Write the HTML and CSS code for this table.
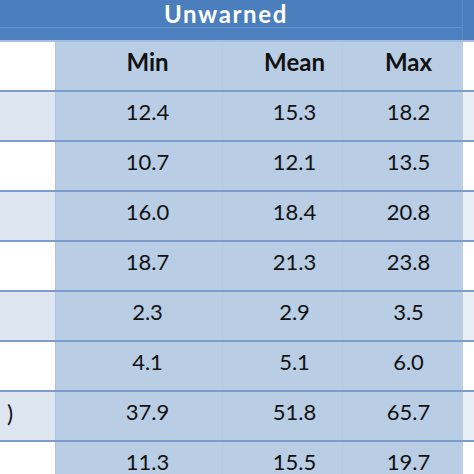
FILE: index.html
```html
<!DOCTYPE html>
<html>
<head>
<meta charset="utf-8">
<link rel="stylesheet" href="styles.css">
</head>
<body>
<div class="table">
  <div class="head">
    <div class="title">Unwarned</div>
    <div class="band"></div>
  </div>
  <div class="row first">
    <div class="lab"></div>
    <div class="cell c1 b">Min</div>
    <div class="cell c2 b">Mean</div>
    <div class="cell c3 b">Max</div>
    <div class="end"></div>
  </div>
  <div class="row alt">
    <div class="lab"></div>
    <div class="cell c1">12.4</div>
    <div class="cell c2">15.3</div>
    <div class="cell c3">18.2</div>
    <div class="end"></div>
  </div>
  <div class="row">
    <div class="lab"></div>
    <div class="cell c1">10.7</div>
    <div class="cell c2">12.1</div>
    <div class="cell c3">13.5</div>
    <div class="end"></div>
  </div>
  <div class="row alt">
    <div class="lab"></div>
    <div class="cell c1">16.0</div>
    <div class="cell c2">18.4</div>
    <div class="cell c3">20.8</div>
    <div class="end"></div>
  </div>
  <div class="row">
    <div class="lab"></div>
    <div class="cell c1">18.7</div>
    <div class="cell c2">21.3</div>
    <div class="cell c3">23.8</div>
    <div class="end"></div>
  </div>
  <div class="row alt">
    <div class="lab"></div>
    <div class="cell c1">2.3</div>
    <div class="cell c2">2.9</div>
    <div class="cell c3">3.5</div>
    <div class="end"></div>
  </div>
  <div class="row">
    <div class="lab"></div>
    <div class="cell c1">4.1</div>
    <div class="cell c2">5.1</div>
    <div class="cell c3">6.0</div>
    <div class="end"></div>
  </div>
  <div class="row alt">
    <div class="lab">)</div>
    <div class="cell c1">37.9</div>
    <div class="cell c2">51.8</div>
    <div class="cell c3">65.7</div>
    <div class="end"></div>
  </div>
  <div class="row">
    <div class="lab"></div>
    <div class="cell c1">11.3</div>
    <div class="cell c2">15.5</div>
    <div class="cell c3">19.7</div>
    <div class="end"></div>
  </div>
</div>
</body>
</html>
```
FILE: styles.css
```css
html, body {
  margin: 0;
  padding: 0;
  background: #ffffff;
  overflow: hidden;
}
.table {
  width: 474px;
  height: 474px;
  font-family: Lato, "Open Sans", sans-serif;
  color: #111111;
}
.head {
  background: #4a7ebd;
  display: flex;
  flex-direction: column;
}
.title {
  height: 28px;
  box-sizing: border-box;
  padding-left: 164px;
  width: 463px;
  border-right: 1px solid #5a8ac6;
  color: #ffffff;
  font-weight: 700;
  font-size: 24px;
  line-height: 27px;
  letter-spacing: 1.6px;
  border-bottom: 1px solid #6a95cb;
}
.band {
  height: 12px;
  width: 463px;
  border-right: 1px solid #5a8ac6;
  box-sizing: border-box;
  background: #4c80be;
}
.row {
  display: grid;
  grid-template-columns: 55px 167px 120px 121px 11px;
  height: 48px;
  border-top: 2px solid #7c9dca;
}
.row.first {
  border-top: 2px solid #a6bfdf;
}
.lab {
  background: #ffffff;
  font-size: 23px;
  padding-left: 7px;
  display: flex;
  align-items: center;
  padding-bottom: 6px;
}
.end {
  background: #ffffff;
}
.row.alt .lab {
  background: #dde6f1;
}
.row.alt .end {
  background: #e9eff7;
}
.cell {
  background: #b9cde5;
  display: flex;
  align-items: center;
  justify-content: center;
  font-size: 22px;
  padding-bottom: 10px;
  box-sizing: border-box;
  border-left: 1px solid #b4c9e2;
}
.c1 { padding-left: 17px; border-left: 1px solid #aec4df; }
.c2 { padding-left: 24px; }
.c3 { padding-left: 11px; }
.b {
  font-weight: 700;
  font-size: 24px;
}
```
